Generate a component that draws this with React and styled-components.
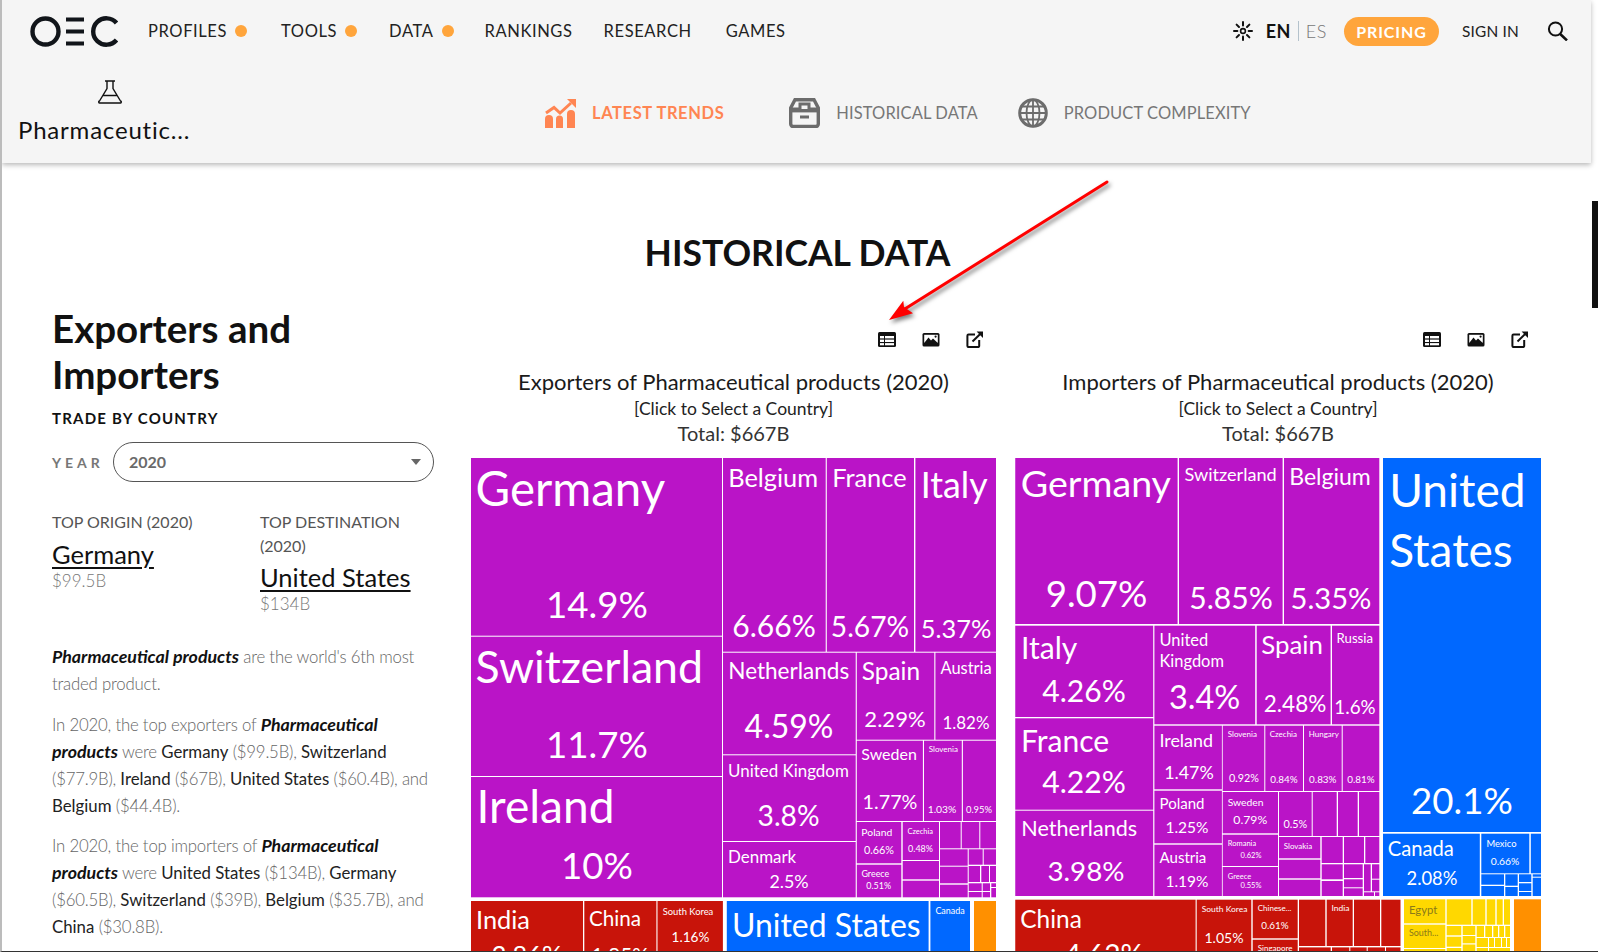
import React from "react";
import styled, { createGlobalStyle } from "styled-components";

const GlobalStyle = createGlobalStyle`
  html, body {
    margin: 0;
    padding: 0;
    background: #fff;
  }
  body {
    font-family: "Lato", "Noto Sans", sans-serif;
    color: #111;
    overflow: hidden;
  }
`;

const Page = styled.div`
  position: relative;
  box-sizing: border-box;
  width: 1598px;
  height: 952px;
  overflow: hidden;
  border-left: 2px solid #bcbcbc;
  border-bottom: 1px solid #333;
`;

const Header = styled.header`
  width: 1589px;
  height: 163px;
  background: #f5f5f5;
  box-shadow: 0 2px 5px rgba(0, 0, 0, 0.28);
`;

const TopBar = styled.div`
  display: flex;
  align-items: center;
  height: 62px;
  padding: 0 22px 0 28px;
`;

const Logo = styled.svg`
  width: 88px;
  height: 31px;
  margin-right: 30px;
  flex-shrink: 0;
`;

const NavItem = styled.a`
  display: flex;
  align-items: center;
  gap: 8px;
  margin-right: ${(p) => p.$gap}px;
  font-size: 16.5px;
  letter-spacing: 0.6px;
  color: #222;
  white-space: nowrap;
`;

const Dot = styled.span`
  width: 12px;
  height: 12px;
  border-radius: 50%;
  background: #ffa53c;
`;

const TopRight = styled.div`
  display: flex;
  align-items: center;
  margin-left: auto;
`;

const SunIcon = styled.svg`
  width: 20px;
  height: 20px;
  margin-right: 13px;
`;

const Lang = styled.span`
  font-size: 18px;
  font-weight: ${(p) => (p.$active ? 700 : 300)};
  color: ${(p) => (p.$active ? "#111" : "#777")};
  letter-spacing: 0.5px;
`;

const LangSep = styled.span`
  width: 1px;
  height: 20px;
  margin: 0 7px;
  background: #b4c2cc;
`;

const PricingPill = styled.a`
  display: flex;
  align-items: center;
  justify-content: center;
  width: 95px;
  height: 29px;
  margin: 0 23px 0 17px;
  border-radius: 15px;
  background: #ffa53c;
  color: #fff;
  font-size: 16px;
  font-weight: 700;
  letter-spacing: 0.9px;
`;

const SignIn = styled.a`
  margin-right: 28px;
  font-size: 15.4px;
  letter-spacing: 0.2px;
  color: #222;
  white-space: nowrap;
`;

const SubBar = styled.div`
  display: flex;
  align-items: center;
  height: 101px;
  padding-left: 16px;
`;

const ProductBlock = styled.div`
  align-self: flex-start;
  width: 171px;
  margin-right: 356px;
  padding-top: 18px;
`;

const FlaskIcon = styled.svg`
  display: block;
  width: 26px;
  height: 24px;
  margin: 0 0 11px 79px;
`;

const ProductName = styled.div`
  font-size: 24px;
  line-height: 30px;
  letter-spacing: 0.8px;
  color: #111;
  white-space: nowrap;
`;

const Tab = styled.a`
  display: flex;
  align-items: center;
  gap: 16px;
  margin-right: ${(p) => p.$gap}px;
  font-size: 16.5px;
  line-height: 24px;
  padding-top: 1px;
  font-weight: ${(p) => (p.$active ? 700 : 400)};
  letter-spacing: ${(p) => (p.$active ? 0.6 : 0.1)}px;
  color: ${(p) => (p.$active ? "#ff8552" : "#777")};
  white-space: nowrap;
`;

const SectionTitle = styled.h2`
  width: 1591px;
  margin: 67px 0 29px;
  text-align: center;
  font-size: 35.5px;
  line-height: 46px;
  font-weight: 700;
  color: #111;
`;

const Columns = styled.div`
  display: flex;
`;

const Sidebar = styled.aside`
  box-sizing: border-box;
  width: 469px;
  padding-left: 50px;
`;

const ProfileTitle = styled.h3`
  margin: 0;
  font-size: 38.5px;
  line-height: 46px;
  font-weight: 700;
  color: #111;
`;

const Subtitle = styled.div`
  margin-top: 9px;
  font-size: 15px;
  line-height: 24px;
  font-weight: 700;
  letter-spacing: 1.2px;
`;

const YearRow = styled.div`
  display: flex;
  align-items: center;
  margin-top: 12px;
`;

const YearLabel = styled.span`
  width: 61px;
  font-size: 14px;
  font-weight: 700;
  letter-spacing: 4px;
  color: #777;
`;

const YearSelect = styled.div`
  display: flex;
  align-items: center;
  justify-content: space-between;
  box-sizing: border-box;
  width: 321px;
  height: 40px;
  padding: 0 12px 1px 15px;
  border: 1px solid #555;
  border-radius: 20px;
  font-size: 16px;
  font-weight: 700;
  color: #6a6a6a;
`;

const Caret = styled.span`
  width: 0;
  height: 0;
  border-left: 5px solid transparent;
  border-right: 5px solid transparent;
  border-top: 6px solid #666;
`;

const Stats = styled.div`
  display: grid;
  grid-template-columns: 208px 172px;
  margin-top: 28px;
`;

const StatLabel = styled.div`
  font-size: 16px;
  line-height: 23.5px;
  color: #555;
`;

const StatValue = styled.a`
  display: block;
  margin-top: 4px;
  font-size: 25.5px;
  line-height: 32px;
  color: #111;
  text-decoration: underline;
  text-decoration-thickness: 2px;
  text-underline-offset: 3px;
  white-space: nowrap;
`;

const StatAmount = styled.div`
  font-size: 17px;
  line-height: 22px;
  font-weight: 300;
  color: #777;
`;

const Blurb = styled.div`
  margin-top: 28px;
`;

const Para = styled.p`
  margin: 0 0 13.6px;
  font-size: 16.8px;
  line-height: 27px;
  font-weight: 300;
  letter-spacing: -0.2px;
  color: #666;
  white-space: nowrap;
`;

const ProductRef = styled.b`
  font-size: 17.8px;
  font-style: italic;
  font-weight: 700;
  letter-spacing: 0;
  color: #111;
`;

const Country = styled.span`
  font-weight: 400;
  letter-spacing: 0;
  color: #222;
`;

const ChartColumn = styled.section`
  display: flex;
  flex-direction: column;
  align-items: center;
  width: ${(p) => p.$width}px;
  margin-right: ${(p) => p.$gap}px;
  padding-top: 26px;
`;

const Toolbar = styled.div`
  display: flex;
  align-items: center;
  justify-content: flex-end;
  gap: 26px;
  align-self: stretch;
  height: 17px;
  padding-right: 12px;
`;

const ToolIcon = styled.svg`
  width: 18px;
  height: 17px;
`;

const ChartTitle = styled.div`
  margin-top: 20px;
  font-size: 22px;
  line-height: 28px;
  color: #1a1a1a;
  white-space: nowrap;
`;

const ChartHint = styled.div`
  font-size: 17.5px;
  line-height: 25px;
  color: #222;
  white-space: nowrap;
`;

const ChartTotal = styled.div`
  font-size: 20px;
  line-height: 24px;
  color: #333;
  white-space: nowrap;
`;

const Treemap = styled.svg`
  display: block;
  width: ${(p) => p.$width}px;
  height: 494px;
  margin-top: 13px;
  flex-shrink: 0;
`;

const ArrowOverlay = styled.svg`
  position: absolute;
  left: 878px;
  top: 175px;
  width: 240px;
  height: 160px;
  filter: drop-shadow(2px 3px 2px rgba(0, 0, 0, 0.5));
  pointer-events: none;
`;

const SideTab = styled.div`
  position: absolute;
  left: 1590px;
  top: 201px;
  width: 6px;
  height: 107px;
  background: #111;
`;

const PURPLE = "#ba14c7";
const RED = "#c8140a";
const BLUE = "#0068ff";
const YELLOW = "#ffd800";
const ORANGE = "#ff9000";
const FONT_SCALE = 0.94;

// tiles are [x0, y0, x1, y1] in page pixels, the svg viewBox does the offset
const exportTiles = [
  { fill: PURPLE, boxes: [
    [471, 458, 722, 635.7], [471, 636.7, 722, 776], [471, 777, 722, 897.3],
    [723, 458, 825.7, 651.7], [826.8, 458, 914, 651.7], [915.4, 458, 996, 651.7],
    [723, 652.7, 855.7, 754.3], [856.8, 652.7, 934.3, 739.7], [935.4, 652.7, 996, 739.7],
    [723, 755.3, 855.7, 841], [723, 842, 855.7, 897.3],
    [856.8, 740.7, 922.9, 821], [924, 740.7, 961.8, 821], [962.9, 740.7, 996, 821],
    [856.8, 822, 901.3, 863.3], [856.8, 864.7, 901.3, 897.3],
    [902.7, 822, 939, 860], [902.7, 861, 939, 879.3], [902.7, 880.7, 939, 897.3],
    [940, 822, 960.7, 848.3], [961.7, 822, 979.3, 848.3], [980.3, 822, 996, 848.3],
    [940, 849.3, 967.7, 865.7], [940, 866.7, 967.7, 883.3], [940, 884.7, 967.7, 897.3],
    [968.7, 849.3, 982.7, 864.7], [983.7, 849.3, 996, 864.7],
    [968.7, 866, 980, 882], [981.3, 866, 989, 882], [990, 866, 996, 882],
    [968.7, 883.3, 981.7, 891], [982.7, 883.3, 990, 891], [991.3, 883.3, 996, 887],
    [991.3, 888, 996, 897.3], [968.7, 892, 981.7, 897.3], [982.7, 892, 990, 897.3],
  ] },
  { fill: RED, boxes: [[471, 901, 583, 952], [584.3, 901, 656.4, 952], [657.5, 901, 722.9, 952]] },
  { fill: BLUE, boxes: [[726.8, 901, 928.6, 952], [930.4, 901, 970, 952]] },
  { fill: ORANGE, boxes: [[974, 901, 996, 952]] },
];

const exportLabels = [
  ["Germany", 477, 505.7, 50.5], ["14.9%", 597, 617.7, 39, "middle"],
  ["Switzerland", 477, 682.7, 47.5], ["11.7%", 597, 757.7, 39, "middle"],
  ["Ireland", 478, 823.3, 49], ["10%", 597, 879, 39, "middle"],
  ["Belgium", 729, 486.5, 27], ["6.66%", 774, 636.7, 32, "middle"],
  ["France", 833, 486.5, 27], ["5.67%", 870, 636.7, 30, "middle"],
  ["Italy", 921.8, 497.7, 38], ["5.37%", 956, 638, 27, "middle"],
  ["Netherlands", 729, 679, 24], ["4.59%", 789, 738, 34, "middle"],
  ["Spain", 862.5, 680, 26], ["2.29%", 895, 726.7, 23.5, "middle"],
  ["Austria", 941, 674.3, 17.5], ["1.82%", 966, 729, 18, "middle"],
  ["United Kingdom", 728.6, 776.5, 18], ["3.8%", 788.6, 825.7, 30, "middle"],
  ["Denmark", 728.6, 863.3, 18], ["2.5%", 789, 887.7, 19, "middle"],
  ["Sweden", 861.8, 760.3, 17], ["1.77%", 890, 809, 21, "middle"],
  ["Slovenia", 929, 752, 8.5], ["1.03%", 942, 812.7, 11, "middle"],
  ["0.95%", 979, 812.7, 10, "middle"],
  ["Poland", 861.7, 835.7, 11], ["0.66%", 879, 854.3, 11.5, "middle"],
  ["Czechia", 907.7, 833.7, 8], ["0.48%", 920.5, 851.7, 9.5, "middle"],
  ["Greece", 861.7, 876.7, 9.5], ["0.51%", 878.7, 888.7, 9.5, "middle"],
  ["India", 476.8, 929.3, 27], ["2.86%", 527, 964, 27, "middle"],
  ["China", 589.6, 926, 22], ["1.85%", 620, 963, 22, "middle"],
  ["South Korea", 663, 915, 10], ["1.16%", 690.5, 942.3, 14.5, "middle"],
  ["United States", 733, 936.7, 34],
  ["Canada", 935.7, 913.7, 9.5],
];

const importTiles = [
  { fill: PURPLE, boxes: [
    [1015.25, 458, 1177.6, 624], [1179, 458, 1282.6, 624], [1284, 458, 1379.3, 624],
    [1015.25, 625.7, 1153.2, 717], [1154.4, 625.7, 1255.2, 724.3],
    [1256.7, 625.7, 1330.6, 724.3], [1332, 625.7, 1379.3, 724.3],
    [1015.25, 718.3, 1153.2, 809.7], [1015.25, 810.7, 1153.2, 896],
    [1154.4, 725.7, 1221.9, 789.3], [1154.4, 790.7, 1221.9, 843.3], [1154.4, 844.7, 1221.9, 896],
    [1222.7, 725.7, 1264.3, 791], [1265.3, 725.7, 1303, 791], [1304, 725.7, 1341.7, 791], [1342.7, 725.7, 1379.3, 791],
    [1222.7, 792, 1278, 833.3], [1222.7, 834.7, 1278, 866], [1222.7, 867, 1278, 896],
    [1279, 792, 1311.7, 836], [1312.7, 792, 1336.7, 836], [1338, 792, 1357.7, 836], [1359, 792, 1379.3, 836],
    [1279, 837, 1320.3, 858.3], [1279, 859.7, 1320.3, 878.3], [1279, 879.7, 1320.3, 896],
    [1321.7, 837, 1342.7, 863], [1321.7, 864.3, 1342.7, 879.3], [1321.7, 881, 1342.7, 896],
    [1344, 837, 1364, 863], [1365.3, 837, 1379.3, 863],
    [1344, 864.3, 1362.7, 878], [1344, 879.3, 1362.7, 887.3], [1344, 888.3, 1362.7, 896],
    [1364, 864.3, 1370.7, 891.3], [1372, 864.3, 1379.3, 878.7], [1372, 879.7, 1379.3, 891.3],
    [1364, 892.3, 1374, 896], [1375, 892.3, 1379.3, 896],
  ] },
  { fill: BLUE, boxes: [
    [1383, 458, 1541, 832], [1383, 833.7, 1479.8, 896],
    [1481.3, 833.7, 1529.3, 873.3], [1530.8, 833.7, 1541, 873.3],
    [1481.3, 874.3, 1504, 884.7], [1481.3, 886, 1504, 896],
    [1505.3, 874.3, 1517.7, 885.7], [1505.3, 887, 1517.7, 896],
    [1519, 874.3, 1531.3, 882], [1519, 883.3, 1531.3, 891], [1519, 892, 1531.3, 896],
    [1532.7, 874.3, 1541, 876.7], [1532.7, 877.7, 1541, 896],
  ] },
  { fill: RED, boxes: [
    [1015.25, 899.7, 1195.6, 952], [1196.7, 899.7, 1251.3, 952],
    [1252.7, 899.7, 1297.7, 938.3], [1252.7, 939.7, 1297.7, 952],
    [1299, 899.7, 1325.3, 946], [1326.7, 899.7, 1352.7, 946], [1354, 899.7, 1380, 946], [1381.3, 899.7, 1400.5, 946],
    [1299, 947.4, 1330.7, 952], [1332, 947.4, 1349.3, 952], [1350.3, 947.4, 1366.7, 952],
    [1367.7, 947.4, 1385, 952], [1386, 947.4, 1400.5, 952],
  ] },
  { fill: YELLOW, boxes: [
    [1404, 899.3, 1445.3, 923.3], [1404, 924.7, 1445.3, 948], [1404, 949, 1445.3, 952],
    [1446.7, 899.3, 1471.3, 924.7], [1472.7, 899.3, 1485.3, 924.7], [1486.7, 899.3, 1495.3, 924.7],
    [1496.7, 899.3, 1502.7, 924.7], [1504, 899.3, 1510, 924.7],
    [1446.7, 926, 1461.3, 935.3], [1462.7, 926, 1475.3, 935], [1476.7, 926, 1484, 937],
    [1485.3, 926, 1492, 937], [1493.3, 926, 1498, 937], [1499.3, 926, 1504, 937], [1505.3, 926, 1510, 937],
    [1446.7, 936.7, 1461.3, 946.7], [1462.7, 936, 1475.3, 943.3], [1476.7, 938, 1488, 947],
    [1489, 938, 1494, 947], [1495, 938, 1501, 947], [1502, 938, 1506, 947], [1507, 938, 1510, 947],
    [1446.7, 948, 1461.3, 952], [1462.7, 944.5, 1475.3, 952], [1476.7, 948, 1488, 952], [1489, 948, 1510, 952],
  ] },
  { fill: ORANGE, boxes: [[1514, 899.3, 1541, 952]] },
];

const importLabels = [
  ["Germany", 1022, 497.3, 40], ["9.07%", 1096.6, 606.7, 39, "middle"],
  ["Switzerland", 1185, 481, 19.3], ["5.85%", 1231, 609.3, 32, "middle"],
  ["Belgium", 1290, 484.5, 24.5], ["5.35%", 1331, 609.3, 31, "middle"],
  ["Italy", 1022, 659, 32], ["4.26%", 1084, 701.7, 32, "middle"],
  ["United", 1160, 646, 17.5], ["Kingdom", 1160, 667.3, 17.5], ["3.4%", 1204.6, 709, 34.5, "middle"],
  ["Spain", 1262, 654, 27.5], ["2.48%", 1295, 712, 24, "middle"],
  ["Russia", 1337, 643.3, 14], ["1.6%", 1355, 714, 20, "middle"],
  ["France", 1022, 751.5, 32], ["4.22%", 1084, 793.3, 32, "middle"],
  ["Netherlands", 1022, 836, 23], ["3.98%", 1086, 880.7, 29.5, "middle"],
  ["Ireland", 1160, 746.5, 19], ["1.47%", 1189, 779, 19, "middle"],
  ["Poland", 1160, 809.3, 16], ["1.25%", 1187, 833.3, 16.5, "middle"],
  ["Austria", 1160, 863.3, 16], ["1.19%", 1187, 886.7, 16.5, "middle"],
  ["Slovenia", 1228, 736.7, 8.5], ["0.92%", 1244, 782.3, 11.5, "middle"],
  ["Czechia", 1270, 736.7, 8.5], ["0.84%", 1284, 783, 10.5, "middle"],
  ["Hungary", 1309, 736.7, 8.5], ["0.83%", 1322.8, 783, 10.5, "middle"],
  ["0.81%", 1361, 783, 10.5, "middle"],
  ["Sweden", 1228, 805.7, 11], ["0.79%", 1250.3, 823.7, 13, "middle"],
  ["Romania", 1228, 845.7, 8], ["0.62%", 1251, 858.3, 8, "middle"],
  ["Greece", 1228, 878.7, 8], ["0.55%", 1251, 888.3, 8, "middle"],
  ["0.5%", 1295.3, 827.7, 11.5, "middle"],
  ["Slovakia", 1284, 848.7, 8.5],
  ["United", 1390.6, 506.5, 49], ["States", 1390.6, 566.5, 49], ["20.1%", 1462, 814, 39, "middle"],
  ["Canada", 1388.3, 856, 21.5], ["2.08%", 1432, 885, 19.5, "middle"],
  ["Mexico", 1486.7, 847, 10], ["0.66%", 1505, 865, 11, "middle"],
  ["China", 1021, 927.5, 26], ["4.62%", 1104, 965, 30, "middle"],
  ["South Korea", 1202, 911.7, 9], ["1.05%", 1224, 943.3, 15, "middle"],
  ["Chinese...", 1258, 910.7, 8.5], ["0.61%", 1275, 929.3, 10.5, "middle"],
  ["Singapore", 1258, 950.7, 8.5],
  ["India", 1331.7, 910.7, 9],
  ["Egypt", 1409.3, 914.3, 12, "start", "#8a7a1a"], ["South...", 1409.3, 936, 9.5, "start", "#8a7a1a"],
];

const TreemapChart = ({ x, width, tiles, labels }) => (
  <Treemap $width={width} viewBox={`${x} 458 ${width} 494`}>
    {tiles.map((group) =>
      group.boxes.map(([x0, y0, x1, y1]) => (
        <rect key={`${x0}-${y0}`} x={x0} y={y0} width={x1 - x0} height={y1 - y0} fill={group.fill} />
      ))
    )}
    {labels.map(([text, tx, ty, size, anchor = "start", color = "#fff"]) => (
      <text
        key={`${text}-${tx}`}
        x={anchor === "start" ? tx - size * 0.03 : tx}
        y={ty}
        fontSize={size * FONT_SCALE}
        textAnchor={anchor}
        fill={color}
      >
        {text}
      </text>
    ))}
  </Treemap>
);

const TableIcon = () => (
  <ToolIcon viewBox="0 0 18 17">
    <rect x="0" y="1" width="18" height="15" rx="1.5" fill="#111" />
    <g fill="#fff">
      <rect x="2" y="5" width="4" height="2.4" />
      <rect x="7" y="5" width="9" height="2.4" />
      <rect x="2" y="8.6" width="4" height="2.4" />
      <rect x="7" y="8.6" width="9" height="2.4" />
      <rect x="2" y="12.1" width="4" height="2.2" />
      <rect x="7" y="12.1" width="9" height="2.2" />
    </g>
  </ToolIcon>
);

const ImageIcon = () => (
  <ToolIcon viewBox="0 0 18 17">
    <rect x="0.5" y="2" width="17" height="13.5" rx="1.5" fill="#111" />
    <rect x="2.2" y="3.8" width="13.6" height="8" fill="#fff" />
    <path d="M2.2 12 L6.5 6.6 L9 9.4 L11 7.6 L15.8 12 Z" fill="#111" />
    <circle cx="13.6" cy="5.6" r="1.1" fill="#111" />
  </ToolIcon>
);

const ShareIcon = () => (
  <ToolIcon viewBox="0 0 18 17">
    <path d="M9 3.6 H2.6 a1.2 1.2 0 0 0 -1.2 1.2 V15 a1.2 1.2 0 0 0 1.2 1.1 H12 a1.2 1.2 0 0 0 1.2 -1.2 V9" fill="none" stroke="#111" strokeWidth="2" />
    <path d="M6.5 10.5 L15 2.2" fill="none" stroke="#111" strokeWidth="2" />
    <path d="M10.6 0.6 H17 V7 Z" fill="#111" />
  </ToolIcon>
);

const ChartTools = () => (
  <Toolbar>
    <TableIcon />
    <ImageIcon />
    <ShareIcon />
  </Toolbar>
);

const App = () => (
  <Page>
    <GlobalStyle />
    <Header>
      <TopBar>
        <Logo viewBox="0 0 88 31">
          <circle cx="15.5" cy="15.5" r="13" fill="none" stroke="#11151a" strokeWidth="4.4" />
          <rect x="36" y="1.5" width="18" height="4" fill="#11151a" />
          <rect x="36" y="13.5" width="18" height="4" fill="#11151a" />
          <rect x="36" y="25.5" width="18" height="4" fill="#11151a" />
          <path d="M86.5 7 A13.2 13.2 0 1 0 86.5 24" fill="none" stroke="#11151a" strokeWidth="4.4" />
        </Logo>
        <NavItem $gap={34}>PROFILES <Dot /></NavItem>
        <NavItem $gap={32}>TOOLS <Dot /></NavItem>
        <NavItem $gap={31}>DATA <Dot /></NavItem>
        <NavItem $gap={31}>RANKINGS</NavItem>
        <NavItem $gap={34}>RESEARCH</NavItem>
        <NavItem $gap={0}>GAMES</NavItem>
        <TopRight>
          <SunIcon viewBox="0 0 20 20">
            <circle cx="10" cy="10" r="2.4" fill="none" stroke="#111" strokeWidth="1.6" />
            <g stroke="#111" strokeWidth="2" strokeLinecap="round">
              <path d="M10 1 V4.4" />
              <path d="M10 15.6 V19" />
              <path d="M1 10 H4.4" />
              <path d="M15.6 10 H19" />
              <path d="M3.6 3.6 L6 6" />
              <path d="M14 14 L16.4 16.4" />
              <path d="M16.4 3.6 L14 6" />
              <path d="M6 14 L3.6 16.4" />
            </g>
          </SunIcon>
          <Lang $active>EN</Lang>
          <LangSep />
          <Lang>ES</Lang>
          <PricingPill>PRICING</PricingPill>
          <SignIn>SIGN IN</SignIn>
          <svg width="22" height="20" viewBox="0 0 22 20">
            <circle cx="8.5" cy="8" r="6.6" fill="none" stroke="#111" strokeWidth="2" />
            <path d="M13.2 13 L20 19.4" stroke="#111" strokeWidth="2.6" />
          </svg>
        </TopRight>
      </TopBar>
      <SubBar>
        <ProductBlock>
          <FlaskIcon viewBox="0 0 26 24">
            <path d="M8 1 H18 M10 1 V8.5 L2.5 21 A1 1 0 0 0 3 23 H23 A1 1 0 0 0 23.5 21 L16 8.5 V1 M6 15.5 H20" fill="none" stroke="#111" strokeWidth="1.4" />
          </FlaskIcon>
          <ProductName>Pharmaceutic...</ProductName>
        </ProductBlock>
        <Tab $active $gap={65}>
          <svg width="31" height="29" viewBox="0 0 31 29">
            <g fill="#ff8552">
              <path d="M0 20 a4 4 0 0 1 8 0 V29 H0 Z" />
              <path d="M11 20 a3.5 3.5 0 0 1 7 0 V29 H11 Z" />
              <path d="M22 15 a4 4 0 0 1 8 0 V29 H22 Z" />
              <path d="M22 0 H31 V9 Z" />
            </g>
            <path d="M1 14 L9 8.5 L15 14 L26 4" fill="none" stroke="#ff8552" strokeWidth="3" />
          </svg>
          LATEST TRENDS
        </Tab>
        <Tab $gap={40}>
          <svg width="31" height="30" viewBox="0 0 31 30">
            <path d="M6 1.8 H25 L29.3 10 V26 a2.5 2.5 0 0 1 -2.5 2.5 H4.2 a2.5 2.5 0 0 1 -2.5 -2.5 V10 Z" fill="none" stroke="#6c6c6c" strokeWidth="3.4" />
            <path d="M2 11 H11 V6 H20 V11 H29" fill="none" stroke="#6c6c6c" strokeWidth="3" />
            <rect x="1.5" y="11" width="28" height="3.4" fill="#6c6c6c" />
            <rect x="11" y="17.5" width="9" height="3" fill="#6c6c6c" />
          </svg>
          HISTORICAL DATA
        </Tab>
        <Tab $gap={0}>
          <svg width="30" height="30" viewBox="0 0 30 30" fill="none" stroke="#6c6c6c">
            <circle cx="15" cy="15" r="13.3" strokeWidth="3" />
            <ellipse cx="15" cy="15" rx="6.5" ry="13.3" strokeWidth="1.8" />
            <path d="M15 2 V28 M2 15 H28 M4 8.5 H26 M4 21.5 H26" strokeWidth="1.8" />
          </svg>
          PRODUCT COMPLEXITY
        </Tab>
      </SubBar>
    </Header>

    <SectionTitle>HISTORICAL DATA</SectionTitle>

    <Columns>
      <Sidebar>
        <ProfileTitle>Exporters and<br />Importers</ProfileTitle>
        <Subtitle>TRADE BY COUNTRY</Subtitle>
        <YearRow>
          <YearLabel>YEAR</YearLabel>
          <YearSelect>2020<Caret /></YearSelect>
        </YearRow>
        <Stats>
          <div>
            <StatLabel>TOP ORIGIN (2020)</StatLabel>
            <StatValue>Germany</StatValue>
            <StatAmount>$99.5B</StatAmount>
          </div>
          <div>
            <StatLabel>TOP DESTINATION<br />(2020)</StatLabel>
            <StatValue>United States</StatValue>
            <StatAmount>$134B</StatAmount>
          </div>
        </Stats>
        <Blurb>
          <Para>
            <ProductRef>Pharmaceutical products</ProductRef> are the world's 6th most<br />traded product.
          </Para>
          <Para>
            In 2020, the top exporters of <ProductRef>Pharmaceutical<br />products</ProductRef> were <Country>Germany</Country> ($99.5B), <Country>Switzerland</Country><br />
            ($77.9B), <Country>Ireland</Country> ($67B), <Country>United States</Country> ($60.4B), and<br />
            <Country>Belgium</Country> ($44.4B).
          </Para>
          <Para>
            In 2020, the top importers of <ProductRef>Pharmaceutical<br />products</ProductRef> were <Country>United States</Country> ($134B), <Country>Germany</Country><br />
            ($60.5B), <Country>Switzerland</Country> ($39B), <Country>Belgium</Country> ($35.7B), and<br />
            <Country>China</Country> ($30.8B).
          </Para>
        </Blurb>
      </Sidebar>

      <ChartColumn $width={525} $gap={19}>
        <ChartTools />
        <ChartTitle>Exporters of Pharmaceutical products (2020)</ChartTitle>
        <ChartHint>[Click to Select a Country]</ChartHint>
        <ChartTotal>Total: $667B</ChartTotal>
        <TreemapChart x={471} width={525} tiles={exportTiles} labels={exportLabels} />
      </ChartColumn>

      <ChartColumn $width={526} $gap={0}>
        <ChartTools />
        <ChartTitle>Importers of Pharmaceutical products (2020)</ChartTitle>
        <ChartHint>[Click to Select a Country]</ChartHint>
        <ChartTotal>Total: $667B</ChartTotal>
        <TreemapChart x={1015} width={526} tiles={importTiles} labels={importLabels} />
      </ChartColumn>
    </Columns>

    <ArrowOverlay viewBox="880 175 240 160">
      <path d="M1107 182 L900 312" stroke="#f00" strokeWidth="3" strokeLinecap="round" fill="none" />
      <path d="M889 320 L903.3 300.7 L904 307 L913 313.3 Z" fill="#f00" />
    </ArrowOverlay>
    <SideTab />
  </Page>
);

export default App;
